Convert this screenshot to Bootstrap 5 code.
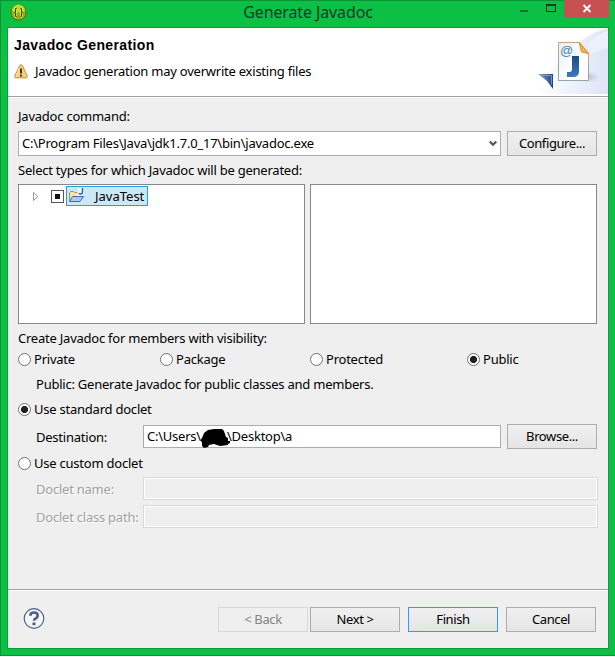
<!DOCTYPE html>
<html lang="en">
<head>
  <meta charset="UTF-8" />
  <meta name="viewport" content="width=device-width, initial-scale=1" />
  <title>Generate Javadoc</title>
  <link href="https://cdn.jsdelivr.net/npm/bootstrap@5.3.0/dist/css/bootstrap.min.css" rel="stylesheet" />
  <style>
    body {
      background: #f0f0f0;
      color: #000;
      font-family: "Noto Sans", "Open Sans", sans-serif;
      font-size: 13px;
      letter-spacing: -0.23px;
      line-height: 18px;
      overflow: hidden;
    }

    svg {
      display: block;
      flex: none;
    }

    .window {
      width: 616px;
      height: 656px;
      background: #0cbf45;
      border: 1px solid #0a9237;
      padding: 0 6px;
    }

    .title-bar {
      height: 26px;
    }

    .title-text {
      font-size: 16px;
      letter-spacing: -0.12px;
      line-height: 23px;
      color: #1c3b25;
    }

    .app-icon {
      left: 3px;
      top: 3px;
    }

    .win-buttons {
      top: -1px;
      left: 507px;
    }

    .dialog-body {
      width: 602px;
      height: 622px;
      background: #efefef;
      border: 1px solid #0a9f3a;
    }

    .banner {
      height: 70px;
      background: #fff;
      border-bottom: 1px solid #fff;
      box-shadow: inset 0 -1px #a0a0a0;
      padding: 9px 0 0 6px;
    }

    .banner-title {
      font-family: "Liberation Sans", Arial, sans-serif;
      font-weight: 700;
      font-size: 14px;
      letter-spacing: 0.38px;
      line-height: 17px;
    }

    .banner-art {
      top: 0;
      right: 0;
    }

    .form-area {
      height: 491px;
      padding: 0 10px;
    }

    .line-label {
      height: 28px;
      padding-top: 5px;
    }

    .command-label {
      height: 33px;
      padding-top: 9px;
    }

    .members-label {
      height: 26px;
    }

    .command-row {
      width: 579px;
    }

    .field {
      background: #fff;
      border: 1px solid #abadb3;
      padding: 0 3px 1px;
      white-space: pre;
    }

    .combo {
      width: 483px;
      height: 25px;
    }

    .dest-field {
      width: 358px;
      height: 23px;
      margin-right: 6px;
    }

    .dest-tail {
      margin-left: 26px;
    }

    .smudge {
      left: 57px;
      top: 2px;
    }

    .field-off {
      width: 455px;
      height: 23px;
      border: 1px solid #d9d9d9;
      box-shadow: inset 0 0 0 1px #fff;
    }

    .win-btn {
      width: 90px;
      height: 25px;
      border: 1px solid #acacac;
      border-radius: 0;
      padding: 0;
      font-size: 13px;
      letter-spacing: -0.4px;
      line-height: 23px;
      color: #000;
      background: linear-gradient(#f0f0f0, #e5e5e5);
    }

    .win-btn:disabled {
      opacity: 1;
      color: #838383;
      background: #efefef;
      border-color: #d9d9d9;
    }

    .win-btn.default-btn {
      border-color: #3399ff;
    }

    .pane {
      width: 287px;
      height: 140px;
      background: #fff;
      border: 1px solid #828790;
      padding-top: 1px;
    }

    .tree-row {
      padding-left: 13px;
    }

    .tree-item {
      width: 82px;
      height: 20px;
      margin-left: 2px;
      background: #cbe8f6;
      border: 1px solid #26a0da;
      padding: 0 0 1px 1px;
      gap: 11px;
      letter-spacing: 0;
    }

    .tri-check {
      width: 13px;
      height: 13px;
      margin-left: 11px;
      border: 1px solid #555;
      background: #fff;
    }

    .tri-check span {
      width: 5px;
      height: 5px;
      background: #111;
    }

    .choice {
      height: 19px;
      gap: 3px;
    }

    .choice span {
      margin-top: -1px;
    }

    .choice input {
      appearance: none;
      flex: none;
      width: 13px;
      height: 13px;
      margin: 0;
      border: 1px solid #707070;
      border-radius: 50%;
      background: #fff;
    }

    .choice input:checked {
      background: radial-gradient(circle, #202020 0 3.2px, #fff 3.9px);
    }

    .visibility {
      display: grid;
      grid-template-columns: 142px 150px 157px auto;
      height: 19px;
    }

    .hint {
      padding-top: 6px;
      margin-bottom: 7px;
    }

    .indent {
      padding-left: 18px;
    }

    .dest-row {
      height: 25px;
      margin: 5px 0;
    }

    .off-row {
      margin-top: 5px;
      color: #a0a0a0;
      text-shadow: 1px 1px #fff;
    }

    .off-row.first-row {
      margin-top: 4px;
    }

    .name-col {
      width: 107px;
      white-space: nowrap;
    }

    .button-bar {
      height: 59px;
      border-top: 1px solid #a0a0a0;
      box-shadow: inset 0 1px #fff;
      padding: 0 12px 0 15px;
    }

    .end-buttons {
      gap: 8px;
      margin-left: 8px;
    }
  </style>
</head>
<body>
  <div class="window">
    <div class="title-bar position-relative text-center">
      <svg class="position-absolute app-icon" width="17" height="17" viewBox="0 0 17 17">
        <circle cx="8.5" cy="8.5" r="7.6" fill="#8fb500" stroke="#557500" />
        <path d="M2 7a6.5 6.5 0 0 1 13 0q-6 3-13 0" fill="#c1dc25" />
        <path d="M7 4Q5.500 4 5.500 5.500V7Q5.500 8.500 4.200 8.500 5.500 8.500 5.500 10v1.500Q5.500 13 7 13M10 4q1.500 0 1.500 1.500V7q0 1.500 1.300 1.500-1.300 0-1.300 1.500v1.500Q11.500 13 10 13" fill="none" stroke="#e6ec9a" stroke-width="2.600" />
        <path d="M7 4Q5.500 4 5.500 5.500V7Q5.500 8.500 4.200 8.500 5.500 8.500 5.500 10v1.500Q5.500 13 7 13M10 4q1.500 0 1.500 1.500V7q0 1.500 1.300 1.500-1.300 0-1.300 1.500v1.500Q11.500 13 10 13" fill="none" stroke="#39420b" stroke-width="1.200" />
      </svg>
      <div class="title-text">Generate Javadoc</div>
      <svg class="position-absolute win-buttons" width="95" height="19" viewBox="514 0 95 19">
        <path d="M520 10h8v2h-8z" fill="#14722f" />
        <path d="M546.500 5v6.500h9V5" fill="none" stroke="#16391f" />
        <path d="M546 4h10v2h-10z" fill="#16391f" />
        <path d="M564 0h45v18h-45z" fill="#c75050" />
        <path d="M583.500 5l7 7M590.500 5l-7 7" stroke="#fff" stroke-width="1.900" />
      </svg>
    </div>

    <div class="dialog-body">
      <div class="banner position-relative">
        <div class="banner-title">Javadoc Generation</div>
        <div class="d-flex align-items-center mt-2">
          <svg width="14" height="15" viewBox="0 0 14 15">
            <path d="M7 .700Q7.900.700 8.300 1.500L13.200 11.800Q13.700 13.800 12 13.800H2Q.300 13.800.800 11.800L5.700 1.500Q6.100.700 7 .700z" fill="#f8cf7c" stroke="#c98b45" />
            <path d="M5.500 4L2.500 11.500" stroke="#fff0c8" />
            <path d="M6 4.500h2v5H6zM6 10.800h2v1.700H6z" fill="#4d3214" />
          </svg>
          <span style="margin-left:7px">Javadoc generation may overwrite existing files</span>
        </div>
        <svg class="position-absolute banner-art" width="75" height="66" viewBox="533 28 75 66">
          <defs>
            <linearGradient id="sky" x1="0" x2="1"><stop offset="0" stop-color="#fff" /><stop offset="1" stop-color="#dce4f6" /></linearGradient>
            <linearGradient id="wing" x1="0" x2="1"><stop offset="0" stop-color="#93aed8" /><stop offset="1" stop-color="#22407f" /></linearGradient>
            <linearGradient id="leaf" x1="0" y1="0" x2="1" y2="1"><stop offset="0" stop-color="#e4eef9" /><stop offset=".6" stop-color="#fff" /></linearGradient>
            <linearGradient id="ink" x1="0" y1="0" x2="0" y2="1"><stop offset="0" stop-color="#1d4a82" /><stop offset="1" stop-color="#3a7cba" /></linearGradient>
            <radialGradient id="shade"><stop offset="0" stop-color="#a99fb5" stop-opacity=".7" /><stop offset="1" stop-color="#bbb" stop-opacity="0" /></radialGradient>
          </defs>
          <path d="M537 94Q545 72 566 56 582 35 608 28V94z" fill="url(#sky)" />
          <path d="M588 44Q597 34 608 31V48Q597 50 591 54z" fill="#edf1fb" />
          <ellipse cx="587" cy="77" rx="13" ry="6" fill="url(#shade)" />
          <path d="M538 74h15v15l-6-8z" fill="url(#wing)" />
          <path d="M541 75.500h10.500v9" fill="none" stroke="#7295c8" />
          <path d="M558.500 42.500h21l9 11v27h-30z" fill="url(#leaf)" stroke="#c5a878" />
          <path d="M558.500 57v23.500h30V63" fill="none" stroke="#91a8aa" />
          <path d="M579 42l9.500 11.500-7-1.500z" fill="#f3b04f" stroke="#d99338" />
          <text x="560" y="54.500" font-family="Liberation Sans, sans-serif" font-size="13" letter-spacing="0" fill="#4d83b5">@</text>
          <path d="M572 56h7v15q0 6-6 6h-6v-5h2.500q2.500 0 2.500-3z" fill="url(#ink)" />
        </svg>
      </div>

      <div class="form-area">
        <div class="command-label">Javadoc command:</div>
        <div class="command-row d-flex justify-content-between">
          <div class="field combo d-flex align-items-center justify-content-between">
            <span>C:\Program Files\Java\jdk1.7.0_17\bin\javadoc.exe</span>
            <svg width="8" height="7" viewBox="0 0 8 7"><path d="M.7 1.500L4 4.800 7.300 1.500" fill="none" stroke="#555" stroke-width="2.200" /></svg>
          </div>
          <button class="btn win-btn">Configure...</button>
        </div>
        <div class="line-label">Select types for which Javadoc will be generated:</div>

        <div class="d-flex" style="gap:5px">
          <div class="pane">
            <div class="tree-row d-flex align-items-center">
              <svg width="8" height="9" viewBox="0 0 8 9"><path d="M1.500.500v8L5.800 4.500z" fill="#fff" stroke="#999" /></svg>
              <span class="tri-check d-flex align-items-center justify-content-center"><span></span></span>
              <span class="tree-item d-flex align-items-center">
                <svg width="16" height="16" viewBox="0 0 16 16">
                  <path d="M1.500 13V4.500l1-1h3l1 1h4V8" fill="#fbe3a0" stroke="#b78d48" />
                  <path d="M4.500 8.500h11l-3.500 5H1.500z" fill="#a9cbed" stroke="#3e69ae" />
                  <path d="M10 0h6v6l-2 2h-5z" fill="#e8f4fb" />
                  <path d="M14.500 0v4q0 2-2 2-1.500 0-1.500-1" fill="none" stroke="#315f94" stroke-width="1.400" />
                </svg>
                <span>JavaTest</span>
              </span>
            </div>
          </div>
          <div class="pane"></div>
        </div>

        <div class="line-label members-label">Create Javadoc for members with visibility:</div>
        <div class="visibility">
          <label class="choice d-flex align-items-center"><input type="radio" name="vis" /><span>Private</span></label>
          <label class="choice d-flex align-items-center"><input type="radio" name="vis" /><span>Package</span></label>
          <label class="choice d-flex align-items-center"><input type="radio" name="vis" /><span>Protected</span></label>
          <label class="choice d-flex align-items-center"><input type="radio" name="vis" checked /><span>Public</span></label>
        </div>
        <div class="indent hint">Public: Generate Javadoc for public classes and members.</div>
        <label class="choice d-flex align-items-center"><input type="radio" name="doclet" checked /><span>Use standard doclet</span></label>

        <div class="indent dest-row d-flex align-items-center">
          <span class="name-col">Destination:</span>
          <div class="field dest-field d-flex align-items-center position-relative">
            <span>C:\Users\</span><span class="dest-tail">\Desktop\a</span>
            <svg class="position-absolute smudge" width="29" height="20" viewBox="0 0 29 20">
              <path d="M1 10L3 5 7 2l6-1h8l2 2 2 6 2 1v3h2v2l-2 1v1l-8 1-6-2-5 1-1 2-4 1-2-2V14l-2-1z" fill="#000" />
            </svg>
          </div>
          <button class="btn win-btn">Browse...</button>
        </div>

        <label class="choice d-flex align-items-center"><input type="radio" name="doclet" /><span>Use custom doclet</span></label>
        <div class="indent off-row first-row d-flex align-items-center">
          <span class="name-col">Doclet name:</span><div class="field-off"></div>
        </div>
        <div class="indent off-row d-flex align-items-center">
          <span class="name-col">Doclet class path:</span><div class="field-off"></div>
        </div>
      </div>

      <div class="button-bar d-flex align-items-center">
        <svg width="22" height="22" viewBox="0 0 22 22">
          <circle cx="11" cy="10.500" r="9.800" fill="#f5f6f8" stroke="#4b6188" stroke-width="1.200" />
          <path d="M7.300 7.800Q7.300 4.500 11 4.500t3.700 3q0 1.800-1.900 2.900-1.800 1-1.800 2.300" fill="none" stroke="#4b6188" stroke-width="2.600" />
          <path d="M9.500 14.500h3v2.700h-3z" fill="#4b6188" />
        </svg>
        <button class="btn win-btn ms-auto" disabled>&lt; Back</button>
        <button class="btn win-btn" style="margin-left:2px">Next &gt;</button>
        <div class="end-buttons d-flex">
          <button class="btn win-btn default-btn">Finish</button>
          <button class="btn win-btn">Cancel</button>
        </div>
      </div>
    </div>
  </div>
  <script src="https://cdn.jsdelivr.net/npm/bootstrap@5.3.0/dist/js/bootstrap.bundle.min.js"></script>
</body>
</html>
